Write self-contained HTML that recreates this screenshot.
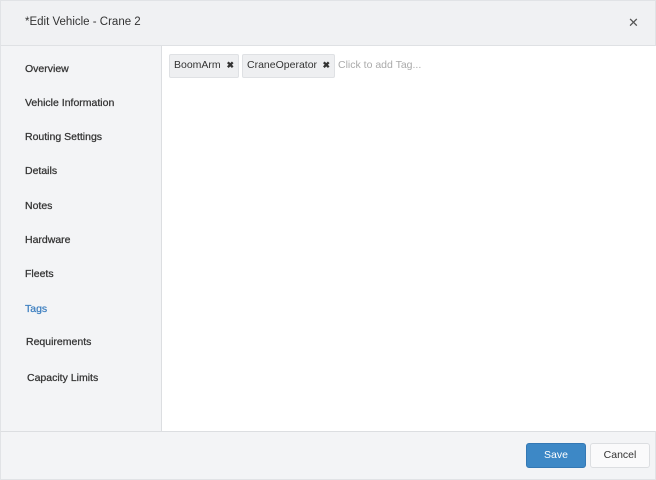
<!DOCTYPE html>
<html><head><style>
body{margin:0;width:656px;height:480px;overflow:hidden;font-family:"Liberation Sans",sans-serif;background:#fff;position:relative}
.hdr{position:absolute;left:0;top:0;width:654px;height:44px;background:#f0f1f3;border:1px solid #e1e3e6;border-bottom:1px solid #dfe1e4}
.title{position:absolute;left:24px;top:15px;font-size:11.5px;color:#333}
.x{position:absolute;left:627px;top:14px;font-size:13px;color:#555}
.side{position:absolute;left:0;top:46px;width:160px;height:385px;background:#f3f4f6;border-right:1px solid #dcdee1;border-left:1px solid #e1e3e6}
.it{position:absolute;left:24px;font-size:10.5px;color:#333;font-weight:normal;-webkit-text-stroke:0.25px #333}
.foot{position:absolute;left:0;top:431px;width:654px;height:47px;background:#f3f4f6;border:1px solid #e1e3e6;border-top:1px solid #dcdee1}
.tag{position:absolute;top:54px;height:24px;background:#eeeff1;border:1px solid #dfe1e4;border-radius:2px;font-size:10.5px;color:#333;box-sizing:border-box;line-height:20px;padding-left:4px}
.tag b{position:absolute;right:4px;top:0;font-size:9px}
.btn{position:absolute;top:443px;height:25px;box-sizing:border-box;border-radius:3px;font-size:10.5px;text-align:center;line-height:23px}
</style></head><body>
<div class="hdr"><div class="title">*Edit Vehicle - Crane 2</div><div class="x">✕</div></div>
<div class="side">
<div class="it" style="top:17px">Overview</div>
<div class="it" style="top:51px">Vehicle Information</div>
<div class="it" style="top:85px">Routing Settings</div>
<div class="it" style="top:119px">Details</div>
<div class="it" style="top:154px">Notes</div>
<div class="it" style="top:188px">Hardware</div>
<div class="it" style="top:222px">Fleets</div>
<div class="it" style="top:257px;color:#3d7fc0;-webkit-text-stroke:0.25px #3d7fc0">Tags</div>
<div class="it" style="top:290px;left:25px">Requirements</div>
<div class="it" style="top:326px;left:26px">Capacity Limits</div>
</div>
<div class="tag" style="left:169px;width:70px">BoomArm<b>✖</b></div>
<div class="tag" style="left:242px;width:93px">CraneOperator<b>✖</b></div>
<div style="position:absolute;left:338px;top:59px;font-size:10.5px;color:#aaa">Click to add Tag...</div>
<div class="foot"></div>
<div class="btn" style="left:526px;width:60px;background:#3d88c6;border:1px solid #3478b4;color:#fff">Save</div>
<div class="btn" style="left:590px;width:60px;background:#fafafb;border:1px solid #dcdee1;color:#333">Cancel</div>
</body></html>
